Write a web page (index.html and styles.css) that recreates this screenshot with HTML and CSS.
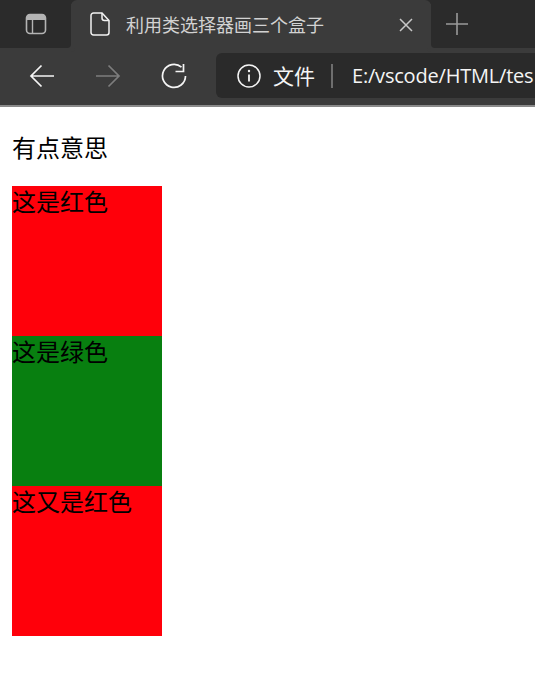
FILE: index.html
```html
<!DOCTYPE html>
<html lang="zh">
  <head>
    <meta charset="UTF-8" />
    <title>利用类选择器画三个盒子</title>
    <link rel="stylesheet" href="styles.css">
  </head>
  <body>
    <div class="browser-bar">
      <div class="tab-strip">
        <div class="strip-left">
          <svg class="icon-tabs" width="22" height="22" viewBox="0 0 22 22" fill="none">
            <rect x="1.5" y="1.5" width="19" height="19" rx="3.5" stroke="#b4b4b4" stroke-width="1.6" />
            <path d="M2 3.5a2 2 0 0 1 2-2h14a2 2 0 0 1 2 2v3.5H2z" fill="#b4b4b4" />
            <path d="M7.5 7v13" stroke="#b4b4b4" stroke-width="1.4" />
          </svg>
        </div>
        <div class="tab">
          <svg class="icon-page" width="20" height="24" viewBox="0 0 20 24" fill="none">
            <path d="M3.5 1h8.5l7 7.5V20.500a2.500 2.500 0 0 1-2.500 2.500h-13A2.500 2.500 0 0 1 1 20.500V3.500A2.500 2.500 0 0 1 3.500 1z" stroke="#f2f2f2" stroke-width="1.5" />
            <path d="M12 1v5a2.500 2.500 0 0 0 2.500 2.500H19" stroke="#f2f2f2" stroke-width="1.5" />
          </svg>
          <span class="tab-title">利用类选择器画三个盒子</span>
          <svg class="icon-close" width="14" height="14" viewBox="0 0 14 14">
            <path d="M1 1l12 12M13 1L1 13" stroke="#c8c8c8" stroke-width="1.5" />
          </svg>
        </div>
        <div class="strip-right">
          <svg class="icon-plus" width="22" height="22" viewBox="0 0 22 22">
            <path d="M11 0v22M0 11h22" stroke="#9a9a9a" stroke-width="1.6" />
          </svg>
        </div>
      </div>
      <div class="toolbar">
        <svg class="nav-btn" width="26" height="24" viewBox="0 0 26 24" fill="none">
          <path d="M25 12H2M12.500 1.500L2 12l10.500 10.500" stroke="#f5f5f5" stroke-width="1.7" />
        </svg>
        <svg class="nav-btn nav-forward" width="26" height="24" viewBox="0 0 26 24" fill="none">
          <path d="M1 12h23M13.500 1.500L24 12 13.500 22.500" stroke="#7d7d7d" stroke-width="1.7" />
        </svg>
        <svg class="nav-btn nav-reload" width="26" height="26" viewBox="0 0 26 26" fill="none">
          <path d="M20.500 4.200A11.500 11.500 0 1 0 24.500 13" stroke="#f5f5f5" stroke-width="1.7" />
          <path d="M14.500 8.500h8V1" stroke="#f5f5f5" stroke-width="1.7" />
        </svg>
        <div class="address-bar">
          <svg class="icon-info" width="24" height="24" viewBox="0 0 24 24" fill="none">
            <circle cx="12" cy="12" r="11" stroke="#f5f5f5" stroke-width="1.500" />
            <path d="M12 10.500v7" stroke="#f5f5f5" stroke-width="1.800" />
            <circle cx="12" cy="7" r="1.200" fill="#f5f5f5" />
          </svg>
          <span class="file-label">文件</span>
          <span class="divider"></span>
          <span class="url">E:/vscode/HTML/tes</span>
        </div>
      </div>
    </div>

    <div class="content">
      <p class="intro">有点意思</p>
      <div class="box red">这是红色</div>
      <div class="box green">这是绿色</div>
      <div class="box red">这又是红色</div>
    </div>
  </body>
</html>
```

FILE: styles.css
```css
html,
body {
  margin: 0;
  height: 100%;
  overflow: hidden;
}
body {
  background-color: #fff;
  font-family: "Liberation Sans", "Noto Sans CJK SC", sans-serif;
}
.browser-bar {
  background-color: #3b3b3b;
  border-bottom: 2px solid #8a8a8a;
  box-sizing: border-box;
  height: 107px;
}
.tab-strip {
  display: flex;
  height: 48px;
  background-color: #2b2b2b;
}
.strip-left {
  width: 71px;
  flex-shrink: 0;
  display: flex;
  align-items: center;
  background-color: #2b2b2b;
  border-bottom-right-radius: 4px;
  box-shadow: 4px 4px 0 0 #3b3b3b;
}
.icon-tabs {
  margin-left: 25px;
}
.tab {
  width: 360px;
  flex-shrink: 0;
  display: flex;
  align-items: center;
  background-color: #3b3b3b;
  border-radius: 6px 6px 0 0;
  color: #d2d2d2;
  font-size: 18px;
}
.icon-page {
  margin-left: 19px;
  flex-shrink: 0;
}
.tab-title {
  margin-left: 16px;
  width: 198px;
  white-space: nowrap;
}
.icon-close {
  margin-top: 2px;
  margin-left: 75px;
  flex-shrink: 0;
}
.strip-right {
  flex: 1;
  display: flex;
  align-items: center;
  background-color: #2b2b2b;
  border-bottom-left-radius: 4px;
  box-shadow: -4px 4px 0 0 #3b3b3b;
}
.icon-plus {
  margin-left: 15px;
}
.toolbar {
  display: flex;
  align-items: center;
  height: 57px;
  padding-left: 29px;
  box-sizing: border-box;
  padding-bottom: 2px;
}
.nav-forward {
  margin-left: 40px;
}
.nav-reload {
  margin-left: 40px;
}
.address-bar {
  margin-left: 29px;
  flex: 1;
  height: 45px;
  display: flex;
  align-items: center;
  background-color: #2a2a2a;
  border-radius: 6px 0 0 6px;
  padding-left: 21px;
  color: #f5f5f5;
  font-size: 21px;
  white-space: nowrap;
  min-width: 0;
}
.icon-info {
  flex-shrink: 0;
}
.file-label {
  margin-left: 12px;
  margin-bottom: 2px;
  flex-shrink: 0;
}
.divider {
  width: 2px;
  height: 24px;
  background-color: #6e6e6e;
  margin: 0 19px 0 16px;
  flex-shrink: 0;
}
.url {
  font-family: "Open Sans", "Liberation Sans", sans-serif;
  font-size: 20px;
  letter-spacing: -0.2px;
}
.content {
  padding: 29px 12px 0;
}
.intro {
  margin: 0 0 24px;
  font-size: 24px;
  line-height: 26px;
  color: #000;
}
.box {
  width: 150px;
  height: 150px;
  font-size: 24px;
  line-height: 34px;
  color: #000;
}
.red {
  background-color: #ff000a;
}
.green {
  background-color: #087f10;
}
```
